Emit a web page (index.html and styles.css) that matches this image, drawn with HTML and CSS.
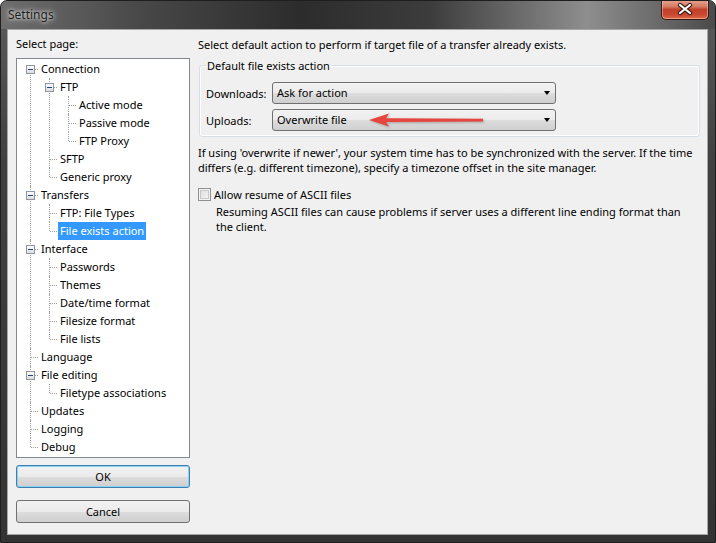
FILE: index.html
```html
<!DOCTYPE html>
<html>
  <head>
    <meta charset="utf-8">
    <title>Settings</title>
    <link rel="stylesheet" href="styles.css">
  </head>
  <body>
    <div class="window">
      <div class="titlebar">
        <span class="title">Settings</span>
        <div class="close">
          <svg width="48" height="20" viewBox="0 0 48 20">
            <path d="M19 6 L29 14 M29 6 L19 14" stroke="#3b1d16" stroke-width="4.4" stroke-linecap="round"/>
            <path d="M19 6 L29 14 M29 6 L19 14" stroke="#ffffff" stroke-width="2.2" stroke-linecap="round"/>
          </svg>
        </div>
      </div>

      <div class="client">
        <div class="left">
          <div class="caption">Select page:</div>
          <div class="tree">
            <ul class="root">
              <li><span class="exp"></span><span class="label">Connection</span>
                <ul>
                  <li><span class="exp"></span><span class="label">FTP</span>
                    <ul>
                      <li><span class="label">Active mode</span></li>
                      <li><span class="label">Passive mode</span></li>
                      <li><span class="label">FTP Proxy</span></li>
                    </ul>
                  </li>
                  <li><span class="label">SFTP</span></li>
                  <li><span class="label">Generic proxy</span></li>
                </ul>
              </li>
              <li><span class="exp"></span><span class="label">Transfers</span>
                <ul>
                  <li><span class="label">FTP: File Types</span></li>
                  <li><span class="label selected">File exists action</span></li>
                </ul>
              </li>
              <li><span class="exp"></span><span class="label">Interface</span>
                <ul>
                  <li><span class="label">Passwords</span></li>
                  <li><span class="label">Themes</span></li>
                  <li><span class="label">Date/time format</span></li>
                  <li><span class="label">Filesize format</span></li>
                  <li><span class="label">File lists</span></li>
                </ul>
              </li>
              <li><span class="label">Language</span></li>
              <li><span class="exp"></span><span class="label">File editing</span>
                <ul>
                  <li><span class="label">Filetype associations</span></li>
                </ul>
              </li>
              <li><span class="label">Updates</span></li>
              <li><span class="label">Logging</span></li>
              <li><span class="label">Debug</span></li>
            </ul>
          </div>
          <button class="btn btn-ok">OK</button>
          <button class="btn btn-cancel">Cancel</button>
        </div>

        <div class="right">
          <p class="heading">Select default action to perform if target file of a transfer already exists.</p>

          <fieldset class="group">
            <legend>Default file exists action</legend>
            <div class="rows">
              <span class="rowlabel">Downloads:</span>
              <div class="combo">Ask for action<span class="arrow"></span></div>
              <span class="rowlabel">Uploads:</span>
              <div class="combo">Overwrite file<span class="arrow"></span>
                <svg class="pointer" width="120" height="18" viewBox="0 0 120 18">
                  <polygon points="3,9 23,2.5 20,7.2 117,7.8 117,10.6 20,11 23,15.5" fill="#e5453c"/>
                </svg>
              </div>
            </div>
          </fieldset>

          <p class="note">If using 'overwrite if newer', your system time has to be synchronized with the server. If the time<br>
            differs (e.g. different timezone), specify a timezone offset in the site manager.</p>

          <label class="check"><span class="box"></span>Allow resume of ASCII files</label>
          <p class="desc">Resuming ASCII files can cause problems if server uses a different line ending format than<br>
            the client.</p>
        </div>
      </div>
    </div>
  </body>
</html>
```

FILE: styles.css
```css
body {
  margin: 0;
  background: #ffffff;
  font-family: "Noto Sans", sans-serif;
  font-size: 11px;
  color: #000000;
}

.window {
  width: 716px;
  height: 543px;
  box-sizing: border-box;
  border: 1px solid #1e1e1e;
  border-radius: 7px 7px 0 0;
  background: linear-gradient(to bottom, #5c5c5c, #404040 30%, #333333);
  display: flex;
  flex-direction: column;
  overflow: hidden;
}

.titlebar {
  height: 28px;
  flex: none;
  position: relative;
  display: flex;
  align-items: center;
  padding-left: 7px;
  background: linear-gradient(to right, #6e6e6e 0%, #474747 20%, #2c2c2c 42%, #3c3c3c 60%, #8e8e8e 82%, #6a6a6a 92%, #4a4a4a 100%);
}

.title {
  font-size: 12px;
  color: #1c1c1c;
  text-shadow: 0 0 6px #ffffff, 0 0 3px rgba(255, 255, 255, 0.7);
  margin-top: -1px;
}

.close {
  position: absolute;
  top: -1px;
  right: 6px;
  width: 48px;
  height: 20px;
  box-sizing: border-box;
  border: 1px solid #3a1a14;
  border-top: none;
  border-radius: 0 0 5px 5px;
  background: linear-gradient(to bottom, #e7a594 0%, #d57a63 35%, #c3402a 50%, #c8462e 75%, #dc6a4a 100%);
  box-shadow: inset 0 0 0 1px rgba(255, 220, 210, 0.45);
}

.close svg {
  display: block;
  margin: -1px 0 0 -1px;
}

.client {
  width: 701px;
  height: 506px;
  flex: none;
  box-sizing: border-box;
  margin-left: 6px;
  border: 1px solid #a6a6a6;
  background: #f0f0f0;
  padding: 6px 6px 0 8px;
  display: flex;
  gap: 8px;
}

.left {
  width: 174px;
  flex: none;
  display: flex;
  flex-direction: column;
}

.caption {
  line-height: 15px;
  margin-bottom: 7px;
}

.tree {
  height: 400px;
  box-sizing: border-box;
  border: 1px solid #828790;
  background: #ffffff;
  overflow: hidden;
}

.tree ul {
  list-style: none;
  margin: 0 0 0 10px;
  padding: 0;
}

.tree ul.root {
  margin: 0;
  padding: 1px 0 0 13px;
}

.tree li {
  position: relative;
  padding-left: 9px;
  line-height: 18px;
}

.tree li::before {
  content: "";
  position: absolute;
  left: 1px;
  top: 9px;
  width: 7px;
  border-top: 1px dotted #a0a0a0;
}

.tree li::after {
  content: "";
  position: absolute;
  left: 0;
  top: 0;
  bottom: 0;
  border-left: 1px dotted #a0a0a0;
}

.tree li:last-child::after {
  bottom: auto;
  height: 9px;
}

.tree ul.root > li:first-child::after {
  top: 9px;
}

.exp {
  position: absolute;
  left: -4px;
  top: 5px;
  width: 9px;
  height: 9px;
  box-sizing: border-box;
  border: 1px solid #8c96a6;
  background: linear-gradient(to bottom, #ffffff, #dcdcdc);
  z-index: 1;
}

.exp::before {
  content: "";
  position: absolute;
  left: 1px;
  top: 3px;
  width: 5px;
  height: 1px;
  background: #23467c;
}

.label {
  display: inline-block;
  height: 18px;
  padding: 0 2px;
  white-space: nowrap;
}

.label.selected {
  background: #3399ff;
  color: #ffffff;
}

.btn {
  height: 23px;
  box-sizing: border-box;
  font: inherit;
  color: #000000;
  border: 1px solid #707070;
  border-radius: 3px;
  background: linear-gradient(to bottom, #f2f2f2 0%, #ebebeb 50%, #dddddd 51%, #cfcfcf 100%);
  padding: 0;
}

.btn-ok {
  margin-top: 7px;
  border-color: #3c7fb1;
  box-shadow: inset 0 0 0 1px #8fd1f3;
}

.btn-cancel {
  margin-top: 12px;
}

.right {
  flex: 1;
  min-width: 0;
}

.heading {
  margin: 1px 0 0;
  line-height: 15px;
}

.group {
  margin: 6px 1px 0;
  padding: 9px 6px 5px;
  border: 1px solid #d5dfe5;
  border-radius: 3px;
  box-shadow: inset 0 0 0 1px #ffffff;
}

.group legend {
  padding: 0 1px;
  line-height: 15px;
}

.rows {
  display: grid;
  grid-template-columns: 66px 284px;
  row-gap: 5px;
  align-items: center;
}

.combo {
  position: relative;
  height: 22px;
  box-sizing: border-box;
  border: 1px solid #707070;
  border-radius: 3px;
  background: linear-gradient(to bottom, #f2f2f2 0%, #ebebeb 50%, #dddddd 51%, #cfcfcf 100%);
  line-height: 20px;
  padding-left: 4px;
}

.arrow {
  position: absolute;
  right: 5px;
  top: 8px;
  width: 0;
  height: 0;
  border-left: 3.5px solid transparent;
  border-right: 3.5px solid transparent;
  border-top: 4px solid #000000;
}

.pointer {
  position: absolute;
  left: 93px;
  top: 1px;
  filter: drop-shadow(1px 1px 1px rgba(0, 0, 0, 0.25));
}

.note {
  margin: 8px 0 0;
  line-height: 15px;
}

.check {
  margin-top: 12px;
  display: flex;
  align-items: center;
  line-height: 15px;
}

.box {
  width: 13px;
  height: 13px;
  box-sizing: border-box;
  border: 1px solid #8e8f8f;
  background: linear-gradient(135deg, #dcdcdc, #f8f8f8);
  box-shadow: inset 0 0 0 1px #f4f4f4, inset 0 0 0 2px #c8c8c8;
  margin-right: 3px;
}

.desc {
  margin: 2px 0 0 18px;
  line-height: 15px;
}
```
